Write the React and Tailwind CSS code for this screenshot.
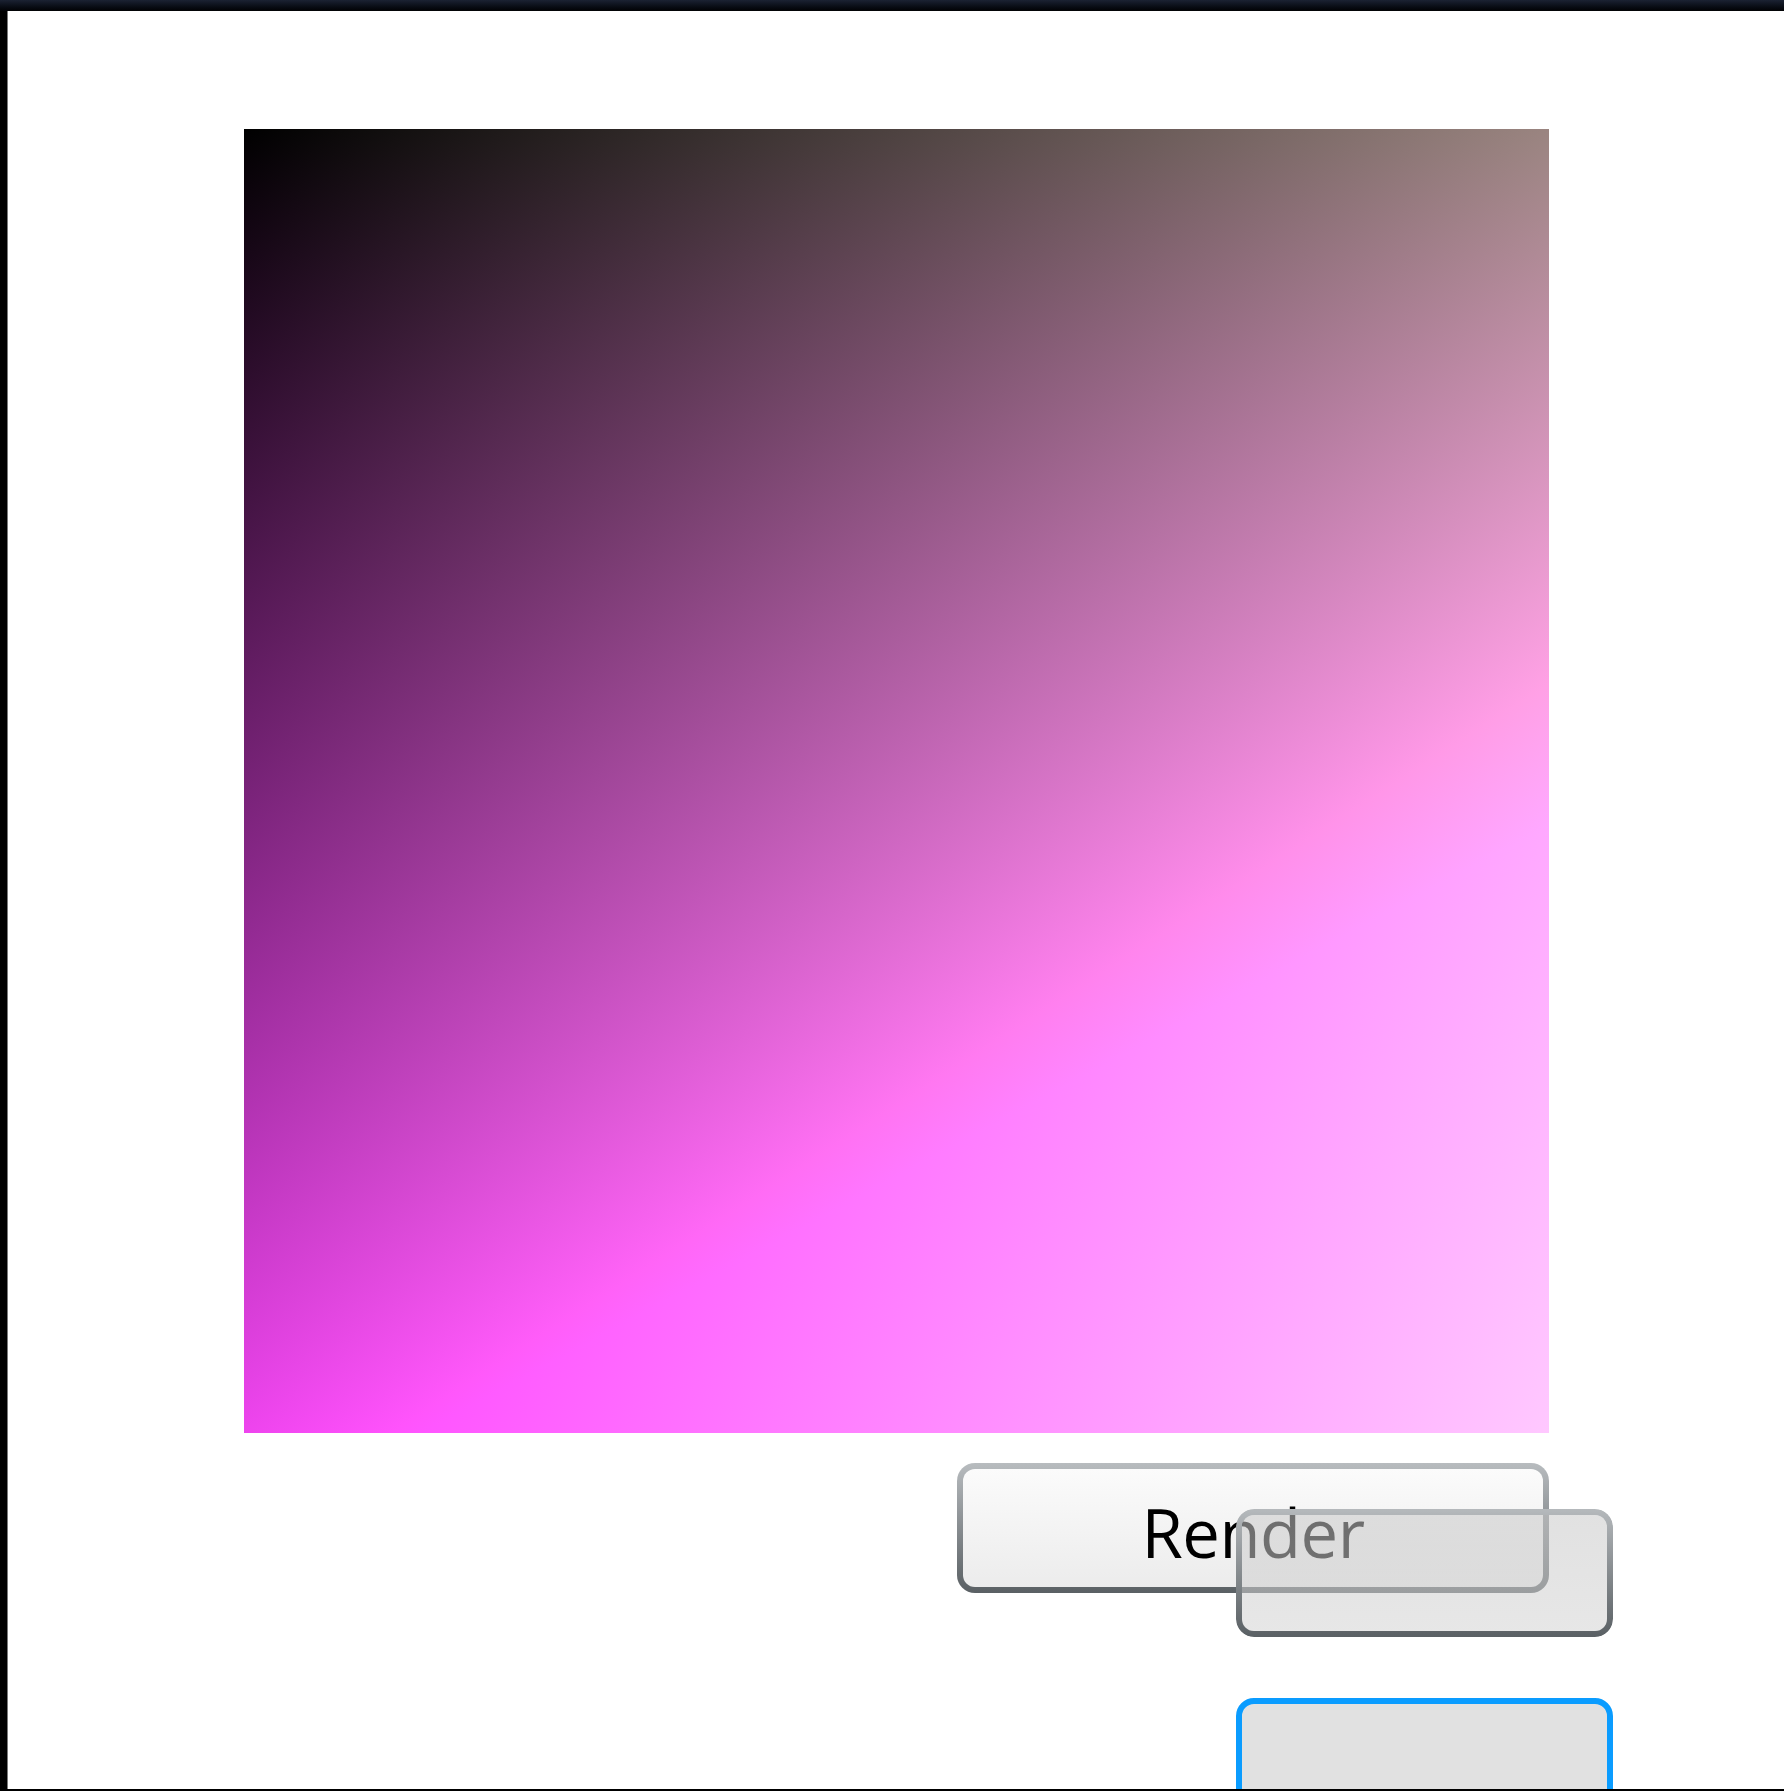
import React from "react";

export default function App() {
  return (
    <div className="w-[1784px] h-[1791px] bg-black flex flex-col overflow-hidden font-['Open_Sans',sans-serif]">
      <div className="h-[11px] shrink-0 bg-gradient-to-b from-[#1b2233] to-[#020305]" />
      <div className="flex flex-1 min-h-0">
        <div className="w-[7px] shrink-0 bg-black" />
        <div className="w-px shrink-0 bg-[#7a7a7a]" />
        <div className="flex-1 bg-white overflow-hidden">
          <div className="ml-[236px] mt-[118px] w-[1369px] flex flex-col">
            <div className="w-[1305px] h-[1304px] bg-black bg-blend-screen [background-image:linear-gradient(147.1deg,#000_0%,#f00_65.1%,#f00_100%),linear-gradient(117deg,#000_0%,#00c800_100%),linear-gradient(151.7deg,#000_0%,#00f_69.7%,#00f_100%)]" />
            <div className="relative ml-[713px] mt-[30px] w-[592px] h-[130px]">
              <div className="w-full h-full rounded-[18px] p-[6px] bg-gradient-to-b from-[#b8bcbf] to-[#5a6064]">
                <div className="w-full h-full rounded-[12px] bg-gradient-to-b from-[#fbfbfb] to-[#ececec] flex items-center justify-center pt-[8px]">
                  <span className="text-[67px] leading-none tracking-[-0.5px] text-black">Render</span>
                </div>
              </div>
              <div className="absolute left-[279px] top-[46px] w-[377px] h-[128px]">
                <div className="absolute inset-[6px] rounded-[12px] bg-gradient-to-b from-[#c9c9c9]/55 to-[#d3d3d3]/55" />
                <div className="absolute inset-0 rounded-[18px] p-[6px] bg-gradient-to-b from-[#b5b9bc] to-[#5a6064] [mask:linear-gradient(#000_0_0)_content-box_exclude,linear-gradient(#000_0_0)]" />
              </div>
            </div>
            <div className="ml-[992px] mt-[105px] w-[377px] h-[130px] rounded-[18px] border-[6px] border-[#0a9cff] bg-[#e1e1e1]" />
          </div>
        </div>
      </div>
      <div className="h-[2px] shrink-0 bg-black" />
    </div>
  );
}
